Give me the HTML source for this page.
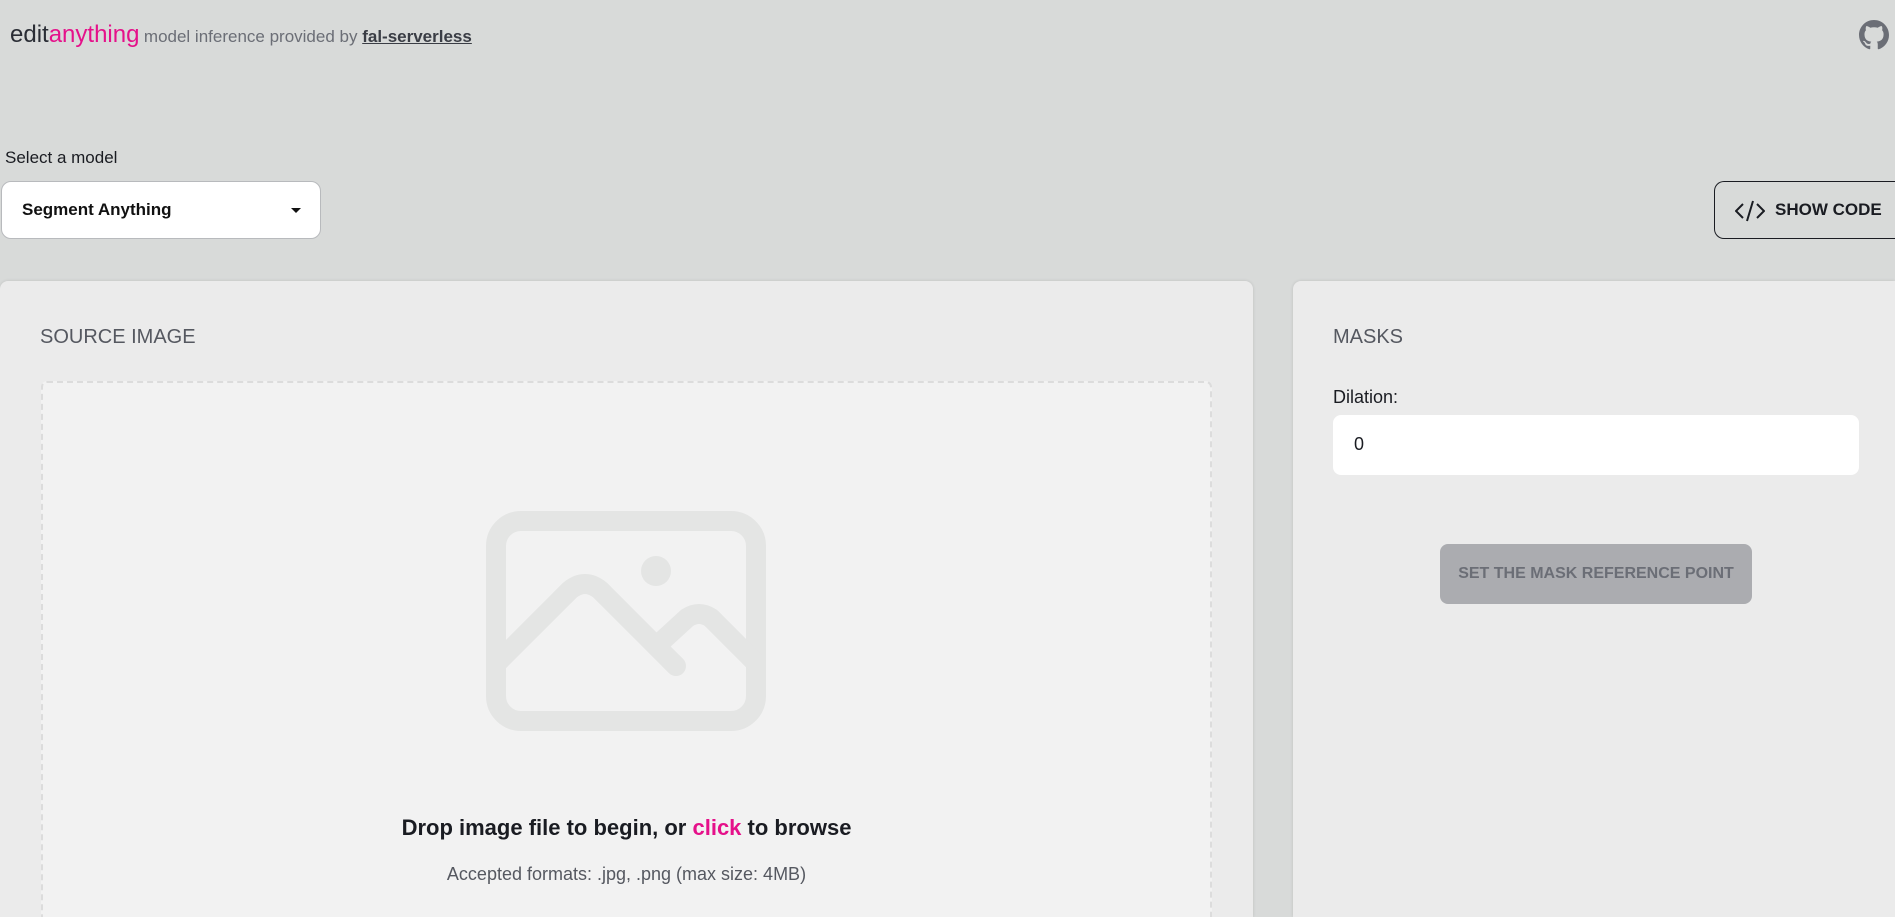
<!DOCTYPE html>
<html style="overflow:hidden;height:917px"><head><meta charset="utf-8"><style>
*{box-sizing:border-box;margin:0;padding:0}
body{width:1895px;height:917px;overflow:hidden;background:#d8dad9;font-family:"Liberation Sans",sans-serif;color:#1a1c22;position:relative}
.abs{position:absolute}
</style></head><body>
<div class="abs" style="left:10px;top:22px;white-space:nowrap;line-height:26px">
<span style="font-size:24px;color:#2a2d35">edit</span><span style="font-size:24px;color:#e5118a">anything</span>
<span style="font-size:17px;color:#6b6e76"> model inference provided by </span><span style="font-size:17px;color:#3a3d45;font-weight:bold;text-decoration:underline">fal-serverless</span>
</div>
<svg class="abs" style="left:1859px;top:20px" width="30" height="30" viewBox="0 0 16 16"><path fill="#6b6e76" d="M8 0C3.58 0 0 3.58 0 8c0 3.54 2.290 6.530 5.47 7.59.4.07.55-.17.55-.38 0-.19-.01-.82-.01-1.49-2.01.37-2.53-.49-2.69-.94-.09-.23-.48-.94-.82-1.13-.28-.15-.68-.52-.01-.53.63-.01 1.08.58 1.230.82.72 1.21 1.87.87 2.33.66.07-.52.28-.87.51-1.07-1.78-.2-3.64-.89-3.64-3.95 0-.87.31-1.59.82-2.15-.08-.2-.36-1.020.08-2.12 0 0 .67-.21 2.2.82.64-.18 1.32-.27 2-.27.68 0 1.36.09 2 .27 1.53-1.04 2.2-.82 2.2-.82.44 1.1.16 1.92.08 2.12.51.56.82 1.27.82 2.15 0 3.07-1.87 3.75-3.65 3.950.29.25.54.73.54 1.48 0 1.07-.01 1.93-.01 2.2 0 .21.15.46.55.38A8.013 8.013 0 0016 8c0-4.42-3.58-8-8-8z"/></svg>
<div class="abs" style="left:5px;top:148px;font-size:17px">Select a model</div>
<div class="abs" style="left:1px;top:181px;width:320px;height:58px;background:#fff;border:1px solid #b8babd;border-radius:10px">
<div class="abs" style="left:20px;top:18px;font-size:17px;font-weight:bold;color:#111">Segment Anything</div>
<div class="abs" style="left:289px;top:26px;width:0;height:0;border-left:5px solid transparent;border-right:5px solid transparent;border-top:5px solid #111"></div>
</div>
<div class="abs" style="left:1714px;top:181px;width:181px;height:58px;border:1.5px solid #1a1c22;border-right:none;border-radius:10px 0 0 10px">
<svg class="abs" style="left:20px;top:17px" width="30" height="24" viewBox="0 0 30 24" fill="none" stroke="#1a1c22" stroke-width="2"><path d="M8 5 1 12l7 7M22 5l7 7-7 7M18 2 12 22"/></svg>
<div class="abs" style="left:60px;top:18px;font-size:17px;font-weight:bold;color:#1a1c22">SHOW CODE</div>
</div>
<div class="abs" style="left:0;top:281px;width:1253px;height:636px;background:#ebebeb;border-radius:8px 8px 0 0;box-shadow:0 0 3px rgba(0,0,0,.12)">
<div class="abs" style="left:40px;top:45px;font-size:20px;color:#555860;font-weight:300">SOURCE IMAGE</div>
<div class="abs" style="left:41px;top:100px;width:1171px;height:536px;background:#f2f2f2;border:2px dashed #dcdcdc;border-bottom:none;border-radius:6px 6px 0 0"></div>
</div>
<svg class="abs" style="left:0;top:0" width="1895" height="917" fill="none" stroke="#e4e5e4" stroke-width="20" stroke-linecap="round" stroke-linejoin="round">
<rect x="496" y="521" width="260" height="200" rx="25"/>
<path d="M498 662 570 590q15-12 30 0l76 76"/>
<path d="M663 640 687 618q12-8 24 0l45 45"/>
<circle cx="656" cy="571" r="15" fill="#e4e5e4" stroke="none"/>
</svg>
<div class="abs" style="left:41px;top:815px;width:1171px;text-align:center;font-size:22px;font-weight:bold;color:#1a1c22">Drop image file to begin, or <span style="color:#e5118a">click</span> to browse</div>
<div class="abs" style="left:41px;top:864px;width:1171px;text-align:center;font-size:18px;color:#555860">Accepted formats: .jpg, .png (max size: 4MB)</div>
<div class="abs" style="left:1293px;top:281px;width:602px;height:636px;background:#ebebeb;border-radius:8px 0 0 0;box-shadow:0 0 3px rgba(0,0,0,.12)">
<div class="abs" style="left:40px;top:45px;font-size:20px;color:#555860;font-weight:300">MASKS</div>
<div class="abs" style="left:40px;top:106px;font-size:18px;color:#1a1c22">Dilation:</div>
<div class="abs" style="left:40px;top:134px;width:526px;height:60px;background:#fff;border-radius:8px">
<div class="abs" style="left:21px;top:19px;font-size:18px">0</div></div>
<div class="abs" style="left:147px;top:263px;width:312px;height:60px;background:#abacb0;border-radius:8px;text-align:center;line-height:60px;font-size:16px;font-weight:bold;color:#6b6e76">SET THE MASK REFERENCE POINT</div>
</div>
</body></html>
